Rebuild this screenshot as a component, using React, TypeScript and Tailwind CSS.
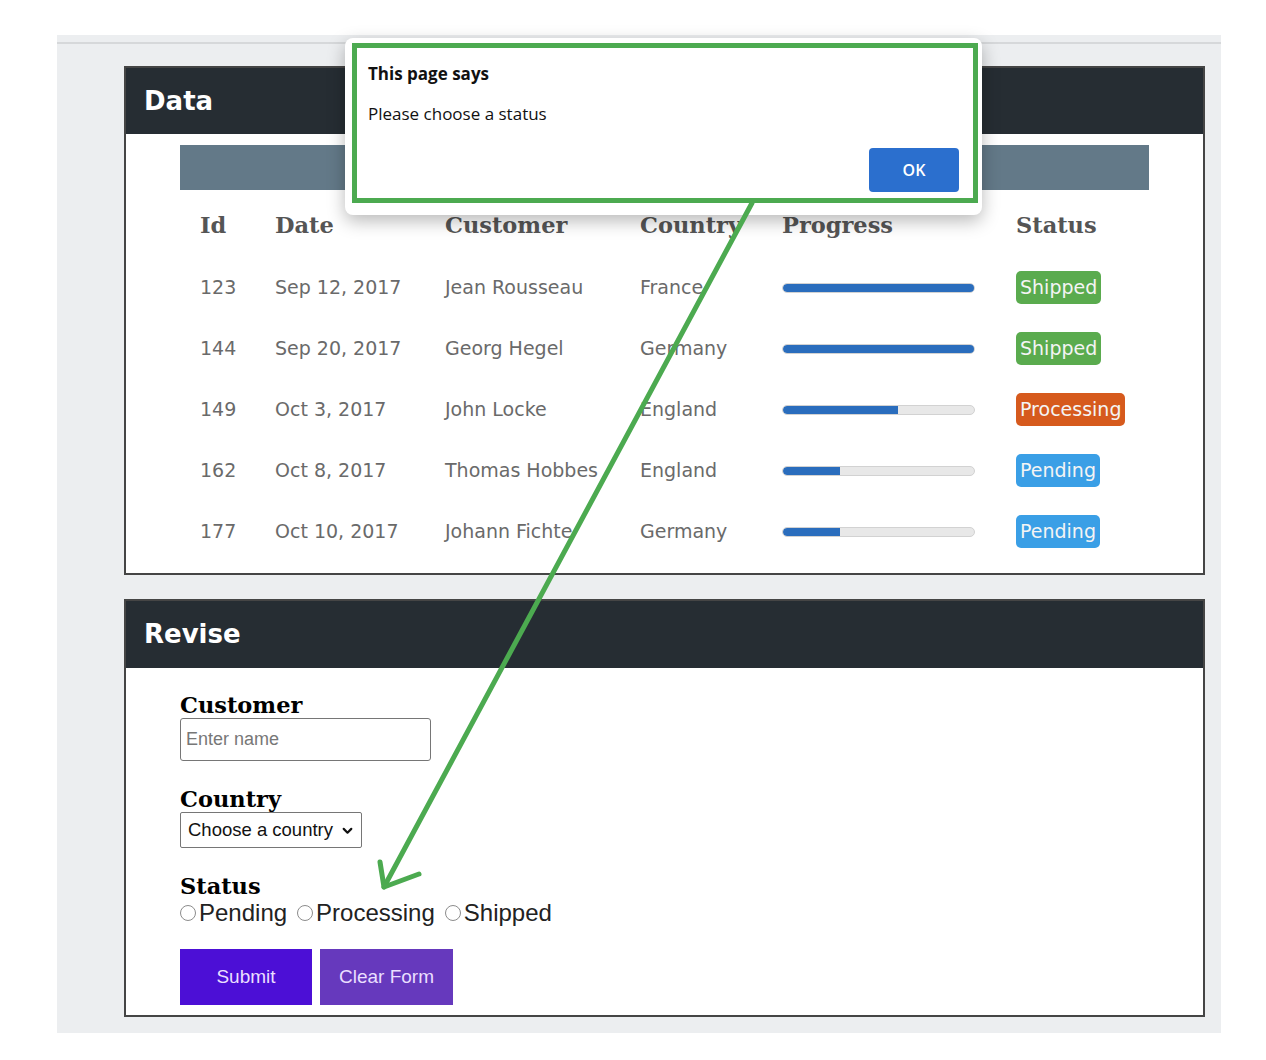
import React from "react";

type Status = "Shipped" | "Processing" | "Pending";

interface Order {
  id: number;
  date: string;
  customer: string;
  country: string;
  progress: number;
  status: Status;
}

const orders: Order[] = [
  { id: 123, date: "Sep 12, 2017", customer: "Jean Rousseau", country: "France", progress: 100, status: "Shipped" },
  { id: 144, date: "Sep 20, 2017", customer: "Georg Hegel", country: "Germany", progress: 100, status: "Shipped" },
  { id: 149, date: "Oct 3, 2017", customer: "John Locke", country: "England", progress: 60, status: "Processing" },
  { id: 162, date: "Oct 8, 2017", customer: "Thomas Hobbes", country: "England", progress: 30, status: "Pending" },
  { id: 177, date: "Oct 10, 2017", customer: "Johann Fichte", country: "Germany", progress: 30, status: "Pending" },
];

const badgeColors: Record<Status, string> = {
  Shipped: "bg-[#5aab4e]",
  Processing: "bg-[#d65a1d]",
  Pending: "bg-[#3a9fe6]",
};

const sans = "font-['DejaVu_Sans',Verdana,sans-serif]";
const serif = "font-['DejaVu_Serif',Georgia,serif]";
const arial = "font-['Liberation_Sans',Arial,sans-serif]";
const cols = "grid grid-cols-[75px_170px_195px_142px_234px_1fr] pl-5 items-center";

function CardHeader({ title, height }: { title: string; height: string }) {
  return (
    <div className={`${height} bg-[#262d33] flex items-center pl-[18px]`}>
      <span className={`${sans} text-[26px] font-bold text-white`}>{title}</span>
    </div>
  );
}

function ProgressBar({ value }: { value: number }) {
  return (
    <div className="w-[193px] h-[10px] rounded-full bg-[#e8e8e8] border border-[#d2d2d2] overflow-hidden">
      <div className="h-full bg-[#2a6dbd] rounded-l-full" style={{ width: `${value}%` }} />
    </div>
  );
}

function Radio({ label }: { label: string }) {
  return (
    <label className="flex items-center gap-[3px]">
      <span className="w-[16px] h-[16px] rounded-full border border-[#8c8c8c] bg-white" />
      <span>{label}</span>
    </label>
  );
}

export default function App() {
  return (
    <div className="relative w-[1266px] h-[1060px] bg-white overflow-hidden">
      <div className="ml-[57px] mt-[35px] w-[1164px] h-[998px] bg-[#eceef0] pt-[7px]">
        <div className="border-t-2 border-[#d6d8da] pt-[22px] pl-[67px]">
          {/* Data card */}
          <div className="w-[1081px] border-2 border-[#454545] bg-white">
            <CardHeader title="Data" height="h-[66px]" />
            <div className="px-[54px] pt-[11px] pb-[11px]">
              <div className="h-[45px] bg-[#637988]" />
              <div className={`${cols} mt-[5px] h-[62px] ${serif} text-[22.5px] font-bold text-[#555]`}>
                <span>Id</span>
                <span>Date</span>
                <span>Customer</span>
                <span>Country</span>
                <span>Progress</span>
                <span>Status</span>
              </div>
              {orders.map((o) => (
                <div key={o.id} className={`${cols} h-[61px] ${sans} text-[19px] text-[#6a6a6a]`}>
                  <span>{o.id}</span>
                  <span>{o.date}</span>
                  <span>{o.customer}</span>
                  <span>{o.country}</span>
                  <ProgressBar value={o.progress} />
                  <div>
                    <span className={`inline-flex items-center h-[33px] px-1 rounded-[5px] text-[#f4f4f4] ${badgeColors[o.status]}`}>
                      {o.status}
                    </span>
                  </div>
                </div>
              ))}
            </div>
          </div>

          {/* Revise card */}
          <div className="mt-[24px] w-[1081px] border-2 border-[#454545] bg-white">
            <CardHeader title="Revise" height="h-[67px]" />
            <div className="px-[54px] pt-[24px] pb-[10px]">
              <div className={`${serif} text-[22.5px] font-bold leading-[26px] text-black`}>Customer</div>
              <input
                placeholder="Enter name"
                className={`${arial} block w-[251px] h-[43px] border border-[#767676] rounded-[3px] px-[5px] text-[18px] placeholder:text-[#777] outline-none`}
              />
              <div className={`${serif} mt-[25px] text-[22.5px] font-bold leading-[26px] text-black`}>Country</div>
              <div className={`${arial} w-[182px] h-[36px] border border-[#767676] rounded-[2px] flex items-center justify-between pl-[7px] pr-[7px] text-[18.5px] text-[#111]`}>
                <span>Choose a country</span>
                <svg width="13" height="13" viewBox="0 0 24 24" fill="none" stroke="#111" strokeWidth="4" strokeLinecap="round" strokeLinejoin="round">
                  <path d="M5 9l7 7 7-7" />
                </svg>
              </div>
              <div className={`${serif} mt-[25px] text-[22.5px] font-bold leading-[26px] text-black`}>Status</div>
              <div className={`${arial} h-[28px] flex items-center gap-[10px] text-[24px] text-[#222]`}>
                <Radio label="Pending" />
                <Radio label="Processing" />
                <Radio label="Shipped" />
              </div>
              <div className={`${arial} mt-[22px] flex gap-2 text-[19px] text-[#eadfff]`}>
                <button className="w-[132px] h-[56px] bg-[#4c0fd6]">Submit</button>
                <button className="w-[133px] h-[56px] bg-[#6639bd]">Clear Form</button>
              </div>
            </div>
          </div>
        </div>
      </div>

      {/* Alert dialog */}
      <div className="absolute left-[345px] top-[38px] w-[637px] h-[177px] bg-white rounded-[8px] shadow-[0_6px_18px_rgba(0,0,0,0.28)] font-['Open_Sans',sans-serif] text-[#111]">
        <div className="pl-[23px] pt-[24px]">
          <div className="text-[17px] font-bold leading-[24px]">This page says</div>
          <div className="mt-[16px] text-[17px] leading-[24px]">Please choose a status</div>
        </div>
        <div className="flex justify-end pr-[23px] mt-[22px]">
          <button className="w-[90px] h-[44px] rounded-[4px] bg-[#2b6fce] text-white text-[16px] font-semibold">OK</button>
        </div>
        <div className="absolute left-[7px] top-[5px] w-[626px] h-[160px] border-[5px] border-[#4caa50]" />
      </div>

      {/* Annotation arrow */}
      <svg className="absolute inset-0 pointer-events-none" width="1266" height="1060">
        <g stroke="#4caa50" strokeWidth="5" fill="none" strokeLinecap="round" strokeLinejoin="round">
          <path d="M752 203 L384 887" />
          <path d="M380 862 L384 887 L419 874" />
        </g>
      </svg>
    </div>
  );
}
